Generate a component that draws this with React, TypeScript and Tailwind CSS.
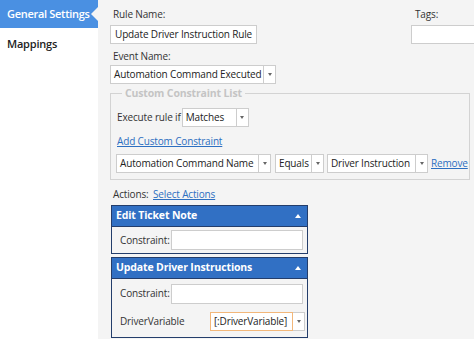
import React from "react";

const font = { fontFamily: '"Open Sans", "Noto Sans", sans-serif' };

function Caret({ white = false }: { white?: boolean }) {
  return (
    <svg width="6" height="4" viewBox="0 0 6 4" className="block">
      <path d="M0 4 L3 0 L6 4 Z" fill={white ? "#ffffff" : "#555"} />
    </svg>
  );
}

function Select({
  text,
  w,
  orange = false,
}: {
  text: string;
  w: string;
  orange?: boolean;
}) {
  return (
    <div className="flex h-[19px] shrink-0">
      <div
        className={`${w} h-full bg-white border ${
          orange ? "border-[#f2b77a]" : "border-[#cdcdcd]"
        } px-[3px] flex items-center text-[#222] whitespace-nowrap overflow-hidden`}
      >
        {text}
      </div>
      <div className="w-[12px] h-full bg-white border border-l-0 border-[#cdcdcd] flex items-center justify-center">
        <svg width="4" height="3" viewBox="0 0 4 3">
          <path d="M0 0 L4 0 L2 3 Z" fill="#666" />
        </svg>
      </div>
    </div>
  );
}

function Panel({
  title,
  children,
}: {
  title: string;
  children: React.ReactNode;
}) {
  return (
    <div className="w-[197px] border border-[#233d6b] bg-[#f4f4f4]">
      <div className="h-[20px] bg-[#3170c4] flex items-center justify-between pl-[4px] pr-[6px]">
        <span className="text-white font-bold text-[10.5px]">{title}</span>
        <Caret white />
      </div>
      <div className="border-t border-[#233d6b]">{children}</div>
    </div>
  );
}

export default function App() {
  return (
    <div
      className="w-[474px] h-[339px] flex overflow-hidden bg-white text-[#333] text-[10px] tracking-[-0.15px]"
      style={font}
    >
      {/* Sidebar */}
      <div className="w-[98px] shrink-0 bg-white flex flex-col">
        <div className="relative h-[28px] bg-[#4a90e2] flex items-center pl-[7px]">
          <span className="text-white font-semibold text-[11px] tracking-[-0.3px] whitespace-nowrap">
            General Settings
          </span>
          <div className="absolute right-0 top-[7px] w-0 h-0 border-y-[7px] border-y-transparent border-r-[7px] border-r-[#f4f4f4]" />
        </div>
        <div className="h-[32px] flex items-center pl-[7px] text-[11px] tracking-[-0.2px] font-semibold text-[#222]">
          Mappings
        </div>
      </div>

      {/* Main */}
      <div className="flex-1 bg-[#f4f4f4] pl-[12px] pt-[6px] text-[#333] relative">
        <div className="flex">
          <div className="flex flex-col w-[301px]">
            <div className="h-[16px] leading-[16px] pl-[3px]">Rule Name:</div>
            <div className="mt-[3px] w-[147px] h-[19px] bg-white border border-[#cdcdcd] px-[4px] flex items-center text-[#222] whitespace-nowrap overflow-hidden">
              Update Driver Instruction Rule
            </div>
            <div className="mt-[4px] h-[16px] leading-[16px] pl-[3px]">Event Name:</div>
            <div className="mt-[1px]">
              <Select text="Automation Command Executed" w="w-[154px]" />
            </div>
          </div>
          <div className="flex flex-col">
            <div className="h-[16px] leading-[16px] pl-[4px]">Tags:</div>
            <div className="mt-[3px] w-[80px] h-[19px] bg-white border border-[#cdcdcd]" />
          </div>
        </div>

        <fieldset className="mt-[1px] w-[360px] min-w-0 border border-[#d3d3d3] pl-[5px] pr-[2px] pb-[6px]">
          <legend className="ml-[6px] px-[3px] h-[16px] leading-[16px] font-bold text-[10.5px] text-[#c4c4c4]">
            Custom Constraint List
          </legend>
          <div className="mt-[7px] flex items-center h-[19px] pl-[1px]">
            <span className="mr-[1px]">Execute rule if</span>
            <Select text="Matches" w="w-[55px]" />
          </div>
          <div className="mt-[6px] h-[16px] leading-[16px] pl-[1px]">
            <a className="text-[#2d6fc1] underline">Add Custom Constraint</a>
          </div>
          <div className="mt-[5px] flex items-center h-[19px]">
            <Select text="Automation Command Name" w="w-[143px]" />
            <div className="ml-[4px]">
              <Select text="Equals" w="w-[37px]" />
            </div>
            <div className="ml-[3px]">
              <Select text="Driver Instruction" w="w-[89px]" />
            </div>
            <a className="ml-[3px] text-[#2d6fc1] underline whitespace-nowrap">Remove</a>
          </div>
        </fieldset>

        <div className="mt-[6px] h-[16px] leading-[16px] pl-[3px]">
          Actions:{" "}
          <a className="ml-[2px] text-[#2d6fc1] underline">Select Actions</a>
        </div>

        <div className="mt-[3px] ml-[1px]">
          <Panel title="Edit Ticket Note">
            <div className="flex items-center h-[26px] pl-[8px]">
              <span className="w-[51px]">Constraint:</span>
              <div className="w-[132px] h-[20px] bg-white border border-[#cdcdcd]" />
            </div>
          </Panel>
        </div>

        <div className="mt-[3px] ml-[1px]">
          <Panel title="Update Driver Instructions">
            <div className="flex items-center h-[27px] pl-[8px] pt-[2px]">
              <span className="w-[51px]">Constraint:</span>
              <div className="w-[132px] h-[20px] bg-white border border-[#cdcdcd]" />
            </div>
            <div className="flex items-center h-[31px] pl-[8px]">
              <span className="w-[90px]">DriverVariable</span>
              <Select text="[:DriverVariable]" w="w-[83px]" orange />
            </div>
          </Panel>
        </div>
      </div>
    </div>
  );
}
